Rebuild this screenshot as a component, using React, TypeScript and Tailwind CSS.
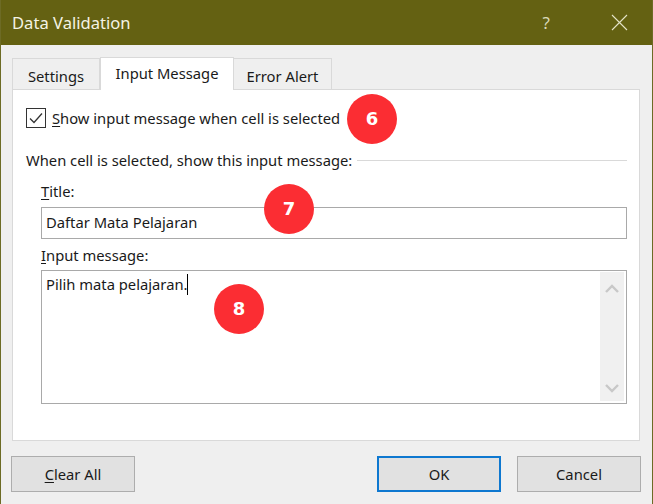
import React from "react";

function Badge({ n, className }: { n: string; className: string }) {
  return (
    <div className={"absolute w-[50px] h-[50px] rounded-full bg-[#fb2d33] text-white flex items-center justify-center text-[18px] font-bold font-['DejaVu_Sans',sans-serif] " + className}>
      {n}
    </div>
  );
}

function Btn({ children, primary }: { children: React.ReactNode; primary?: boolean }) {
  return (
    <button className={"w-[124px] h-9 bg-[#e1e1e1] flex items-center justify-center text-[#1a1a1a] " + (primary ? "border-2 border-[#0e78d0]" : "border border-[#adadad]")}>
      {children}
    </button>
  );
}

export default function App() {
  return (
    <div className="relative w-[653px] h-[504px] overflow-hidden bg-[#efefef] border-x border-[#6d6b25] text-[14.75px] leading-5 text-[#1a1a1a] font-['Noto_Sans',sans-serif] flex flex-col">
      <div className="h-[45px] shrink-0 bg-[#646112] text-[#f4f3e4] flex items-center pl-3 pr-[25px] -mx-px">
        <span className="text-[16.6px]">Data Validation</span>
        <span className="ml-auto text-[17px] text-[#d9d8b8] mr-[61px]">?</span>
        <svg width="17" height="17" viewBox="0 0 17 17" className="text-[#e4e3c8]">
          <path d="M1 1l15 15M16 1L1 16" stroke="currentColor" strokeWidth="1.1" fill="none" />
        </svg>
      </div>

      <div className="flex items-end pl-[11px] h-[44px] shrink-0">
        <div className="w-[88px] h-[31px] bg-[#efefef] border border-b-0 border-[#d9d9d9] flex items-center justify-center pt-[3px]">Settings</div>
        <div className="relative z-10 w-[134px] h-[33px] -mb-px bg-white border border-b-0 border-[#d9d9d9] flex items-center justify-center pb-0.5">Input Message</div>
        <div className="w-[98px] h-[31px] bg-[#efefef] border border-b-0 border-l-0 border-[#d9d9d9] flex items-center justify-center pt-[3px]">Error Alert</div>
      </div>

      <div className="ml-[11px] w-[628px] h-[352px] shrink-0 bg-white border border-[#d9d9d9] pl-[13px] pr-[12px] flex flex-col">
        <div className="flex items-center h-5 mt-[18px]">
          <div className="w-5 h-5 border border-[#333] flex items-center justify-center">
            <svg width="14" height="12" viewBox="0 0 14 12">
              <path d="M1 6.5l4 4L13 1.5" stroke="#333" strokeWidth="1.3" fill="none" />
            </svg>
          </div>
          <span className="ml-[6px]"><span className="underline underline-offset-2">S</span>how input message when cell is selected</span>
        </div>
        <div className="flex items-center mt-[22px] h-5">
          <span>When cell is selected, show this input message:</span>
          <div className="flex-1 h-px bg-[#d9d9d9] ml-[5px]" />
        </div>
        <div className="ml-[15px] mr-0 mt-[11px]">
          <div className="h-5"><span className="underline underline-offset-2">T</span>itle:</div>
          <div className="mt-[6px] h-8 w-[586px] border border-[#a9a9a9] flex items-center pl-1 pb-0.5">Daftar Mata Pelajaran</div>
          <div className="mt-[6px] h-5"><span className="underline underline-offset-2">I</span>nput message:</div>
          <div className="mt-[5px] h-[134px] w-[586px] border border-[#a9a9a9] pl-1 pt-[3px] flex">
            <div className="flex-1 flex items-start">
              <span>Pilih mata pelajaran.</span>
              <span className="w-px h-[21px] bg-black" />
            </div>
            <div className="w-6 mt-[-2px] mb-0.5 mr-0.5 bg-[#f0f0f0] flex flex-col justify-between items-center pt-3 pb-2">
              <svg width="14" height="9" viewBox="0 0 14 9"><path d="M1 8L7 2l6 6" stroke="#c8c8c8" strokeWidth="2.4" fill="none" /></svg>
              <svg width="14" height="9" viewBox="0 0 14 9"><path d="M1 1l6 6 6-6" stroke="#c8c8c8" strokeWidth="2.4" fill="none" /></svg>
            </div>
          </div>
        </div>
      </div>

      <div className="flex items-center mt-[15px] pl-[10px]">
        <Btn><span><span className="underline underline-offset-2">C</span>lear All</span></Btn>
        <div className="ml-[242px]"><Btn primary>OK</Btn></div>
        <div className="ml-4"><Btn>Cancel</Btn></div>
      </div>

      <Badge n="6" className="left-[346px] top-[94px]" />
      <Badge n="7" className="left-[263px] top-[184px]" />
      <Badge n="8" className="left-[213px] top-[284px]" />
    </div>
  );
}
